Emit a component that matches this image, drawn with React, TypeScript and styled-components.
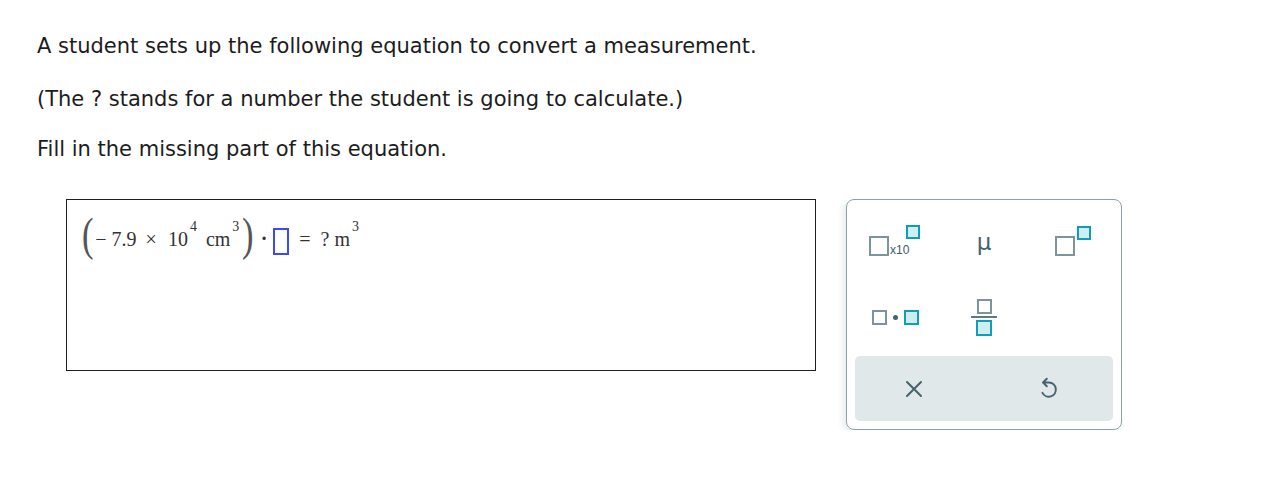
import React from "react";
import styled, { createGlobalStyle } from "styled-components";

const GlobalStyle = createGlobalStyle`
  html, body {
    margin: 0;
    padding: 0;
    background: #ffffff;
  }
  body {
    font-family: "DejaVu Sans", Verdana, sans-serif;
    color: #1c1c1c;
  }
`;

const Page = styled.div`
  padding: 34px 0 0 37px;
`;

const Prompt = styled.p<{ $gap: number }>`
  margin: 0 0 ${(p) => p.$gap}px 0;
  font-size: 21px;
  line-height: 24px;
`;

const Workspace = styled.div`
  display: flex;
  align-items: flex-start;
  gap: 30px;
  margin: 0 0 0 29px;
`;

const AnswerBox = styled.div`
  box-sizing: border-box;
  width: 750px;
  height: 172px;
  border: 1px solid #1f1f1f;
  padding: 15px 0 0 13px;
`;

const MathLine = styled.div`
  display: flex;
  align-items: center;
  font-family: "Liberation Serif", "Times New Roman", serif;
  font-size: 20px;
  color: #333333;
  height: 46px;
`;

const Paren = styled.span<{ $ml?: number }>`
  font-size: 46px;
  line-height: 46px;
  color: #555555;
  transform: scaleX(0.75);
  display: inline-block;
  margin-top: -6px;
  margin-left: ${(p) => p.$ml ?? 0}px;
`;

const Term = styled.span<{ $ml?: number }>`
  margin-left: ${(p) => p.$ml ?? 0}px;
  position: relative;
  top: 1px;
  white-space: pre;
`;

const Sup = styled.span`
  font-size: 14px;
  position: relative;
  top: -11px;
  margin-left: 2px;
`;

const Dot = styled.span`
  margin: 0 6px 0 5px;
  font-weight: bold;
`;

const Slot = styled.span`
  box-sizing: border-box;
  display: inline-block;
  width: 16px;
  height: 27px;
  border: 2px solid #3a4bef;
  position: relative;
  top: 3px;
`;

const Keypad = styled.div`
  box-sizing: border-box;
  width: 276px;
  height: 231px;
  border: 1px solid #8ea1a8;
  border-radius: 8px;
  padding: 3px 8px 8px 8px;
  display: flex;
  flex-direction: column;
  box-shadow: -3px 3px 6px rgba(120, 140, 150, 0.18);
`;

const KeyGrid = styled.div`
  display: grid;
  grid-template-columns: repeat(3, 86px);
  grid-template-rows: 76px 77px;
`;

const Key = styled.div`
  display: flex;
  align-items: center;
  justify-content: center;
`;

const ActionBar = styled.div`
  height: 65px;
  background: #e0e8ea;
  border-radius: 5px;
  display: grid;
  grid-template-columns: 1fr 1fr;
`;

const ActionKey = styled.div<{ $shift?: number }>`
  display: flex;
  align-items: center;
  justify-content: center;
  transform: translateX(${(p) => p.$shift ?? 0}px);
`;

const Box = styled.span<{ $size: number; $accent?: boolean }>`
  box-sizing: border-box;
  display: inline-block;
  width: ${(p) => p.$size}px;
  height: ${(p) => p.$size}px;
  border: 2px solid ${(p) => (p.$accent ? "#0e9fb7" : "#7c949c")};
  background: ${(p) => (p.$accent ? "#cdeef3" : "#ffffff")};
`;

const SciIcon = styled.div`
  position: relative;
  width: 50px;
  height: 32px;
  transform: translateX(-4px);
`;

const PowerIcon = styled.div`
  position: relative;
  width: 36px;
  height: 30px;
  transform: translateX(3px);
`;

const Corner = styled.span<{ $left: number; $top: number }>`
  position: absolute;
  left: ${(p) => p.$left}px;
  top: ${(p) => p.$top}px;
  display: flex;
  align-items: flex-end;
`;

const Times = styled.span`
  font-family: "Liberation Sans", Arial, sans-serif;
  font-size: 12px;
  color: #3e5a64;
  line-height: 12px;
  margin-left: 1px;
`;

const Mu = styled.span`
  font-family: "DejaVu Sans", sans-serif;
  font-size: 23px;
  color: #45636d;
  margin-top: 2px;
`;

const DotRow = styled.div`
  display: flex;
  align-items: center;
  gap: 6px;
  transform: translateX(-3px);
`;

const SmallDot = styled.span`
  width: 5px;
  height: 5px;
  border-radius: 50%;
  background: #45636d;
`;

const Fraction = styled.div`
  display: flex;
  flex-direction: column;
  align-items: center;
  gap: 2px;
`;

const Bar = styled.span`
  width: 26px;
  height: 2px;
  background: #5f7a83;
`;

const ClearIcon = () => (
  <svg width="18" height="18" viewBox="0 0 18 18" fill="none">
    <path d="M2 2 L16 16 M16 2 L2 16" stroke="#45636d" strokeWidth="2" strokeLinecap="round" />
  </svg>
);

const UndoIcon = () => (
  <svg width="24" height="27" viewBox="0 0 22 24" fill="none">
    <path
      d="M9 3 L5.5 6.5 L9 10 M6 6.5 H11 A6.5 6.5 0 1 1 5 16"
      stroke="#45636d"
      strokeWidth="1.8"
      strokeLinecap="round"
      strokeLinejoin="round"
    />
  </svg>
);

const App = () => {
  return (
    <>
      <GlobalStyle />
      <Page>
        <Prompt $gap={29}>A student sets up the following equation to convert a measurement.</Prompt>
        <Prompt $gap={26}>(The ? stands for a number the student is going to calculate.)</Prompt>
        <Prompt $gap={38}>Fill in the missing part of this equation.</Prompt>
        <Workspace>
          <AnswerBox>
            <MathLine>
              <Paren>(</Paren>
              <Term>− 7.9</Term>
              <Term $ml={9}>×</Term>
              <Term $ml={11}>10</Term>
              <Sup>4</Sup>
              <Term $ml={9}>cm</Term>
              <Sup>3</Sup>
              <Paren $ml={1}>)</Paren>
              <Dot>·</Dot>
              <Slot />
              <Term $ml={10}>=</Term>
              <Term $ml={10}>? m</Term>
              <Sup>3</Sup>
            </MathLine>
          </AnswerBox>
          <Keypad>
            <KeyGrid>
              <Key>
                <SciIcon>
                  <Corner $left={0} $top={11}>
                    <Box $size={20} />
                    <Times>x10</Times>
                  </Corner>
                  <Corner $left={37} $top={0}>
                    <Box $size={14} $accent />
                  </Corner>
                </SciIcon>
              </Key>
              <Key>
                <Mu>μ</Mu>
              </Key>
              <Key>
                <PowerIcon>
                  <Corner $left={0} $top={10}>
                    <Box $size={20} />
                  </Corner>
                  <Corner $left={22} $top={0}>
                    <Box $size={14} $accent />
                  </Corner>
                </PowerIcon>
              </Key>
              <Key>
                <DotRow>
                  <Box $size={15} />
                  <SmallDot />
                  <Box $size={15} $accent />
                </DotRow>
              </Key>
              <Key>
                <Fraction>
                  <Box $size={15} />
                  <Bar />
                  <Box $size={16} $accent />
                </Fraction>
              </Key>
              <Key />
            </KeyGrid>
            <ActionBar>
              <ActionKey $shift={-6}>
                <ClearIcon />
              </ActionKey>
              <ActionKey>
                <UndoIcon />
              </ActionKey>
            </ActionBar>
          </Keypad>
        </Workspace>
      </Page>
    </>
  );
};

export default App;
